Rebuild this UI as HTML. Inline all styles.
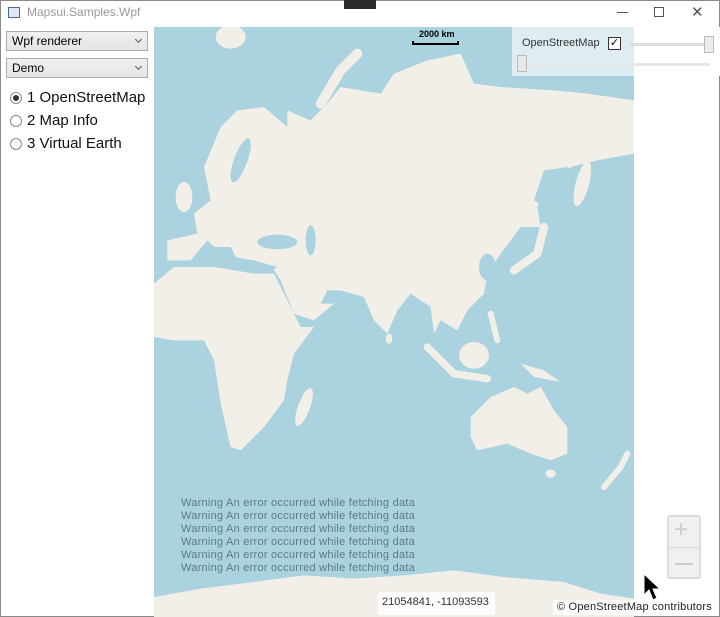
<!DOCTYPE html>
<html><head><style>
*{margin:0;padding:0;box-sizing:border-box}
body{width:720px;height:617px;background:#fff;position:relative;overflow:hidden;font-family:"Liberation Sans",sans-serif}
.win{position:absolute;left:0;top:0;width:720px;height:617px;border:1px solid #8a8a8a}
.t{position:absolute;white-space:nowrap}
.combo{position:absolute;left:6px;width:142px;height:20px;border:1px solid #acacac;background:linear-gradient(#f0f0f0,#e5e5e5);font-size:12px;padding:2px 5px;color:#000}
.combo:after{content:"";position:absolute;right:6px;top:5px;width:4px;height:4px;border-right:1px solid #555;border-bottom:1px solid #555;transform:rotate(45deg)}
.radio{position:absolute;left:10px;width:12px;height:12px;border:1px solid #888;border-radius:50%;background:#fff}
.rl{position:absolute;left:27px;font-size:15px;color:#111}
.warn{position:absolute;left:181px;font-size:11px;letter-spacing:0.25px;color:#5a7b87;line-height:13px}
</style></head><body>
<div class="win"></div>
<div class="t" style="left:8px;top:7px;width:12px;height:11px;border:1px solid #4a6a9a;background:#dfe8f3"></div>
<div class="t" style="left:27px;top:5px;font-size:12px;color:#999">Mapsui.Samples.Wpf</div>
<div class="t" style="left:344px;top:0;width:32px;height:9px;background:#2b2b2b"></div>
<div class="t" style="left:617px;top:12px;width:11px;height:1px;background:#555"></div>
<div class="t" style="left:654px;top:7px;width:10px;height:10px;border:1px solid #555"></div>
<div class="t" style="left:691px;top:3px;font-size:15px;color:#555">✕</div>

<div class="combo" style="top:31px">Wpf renderer</div>
<div class="combo" style="top:58px">Demo</div>
<div class="radio" style="top:92px"><div style="position:absolute;left:2px;top:2px;width:6px;height:6px;border-radius:50%;background:#333"></div></div>
<div class="rl" style="top:89px">1 OpenStreetMap</div>
<div class="radio" style="top:115px"></div>
<div class="rl" style="top:112px">2 Map Info</div>
<div class="radio" style="top:138px"></div>
<div class="rl" style="top:135px">3 Virtual Earth</div>

<svg style="position:absolute;left:154px;top:27px" width="480" height="590" viewBox="0 0 1440 1770">
<rect width="1440" height="1770" fill="#aad3df"/>
<g fill="#f2efe9">
<path d="M40,640 L130,620 L120,560 L170,520 L150,420 L200,300 L250,250 L330,240 L400,300 L400,250 L470,280 L520,230 L560,180 L620,190 L680,200 L720,140 L820,100 L920,80 L960,170 L1040,180 L1200,190 L1300,200 L1440,220 L1440,380 L1330,400 L1250,420 L1180,470 L1150,540 L1160,600 L1100,600 L1040,680 L1000,740 L990,800 L940,850 L910,910 L860,880 L840,920 L830,840 L770,800 L730,850 L700,920 L660,880 L630,810 L560,790 L520,790 L500,830 L540,830 L480,880 L420,860 L380,760 L360,730 L300,700 L250,700 L230,660 L180,660 L160,640 L110,700 L40,700 Z"/>
<path d="M0,770 L60,720 L180,720 L300,740 L360,740 L400,820 L440,900 L480,900 L420,980 L400,1060 L390,1120 L330,1200 L260,1270 L230,1260 L200,1130 L180,1000 L150,940 L60,940 L0,930 Z"/>
<ellipse cx="450" cy="1140" rx="18" ry="60" transform="rotate(20 450 1140)"/>
<path d="M950,1170 L1010,1110 L1080,1080 L1120,1100 L1160,1080 L1200,1150 L1240,1200 L1240,1280 L1190,1300 L1130,1280 L1060,1250 L970,1270 L950,1230 Z"/>
<ellipse cx="960" cy="985" rx="45" ry="40"/>
<path d="M1100,1010 L1170,1030 L1220,1065 L1140,1050 Z"/>
<ellipse cx="90" cy="510" rx="25" ry="45"/>
<ellipse cx="230" cy="30" rx="45" ry="35"/>
<ellipse cx="1190" cy="1340" rx="15" ry="12"/>
<ellipse cx="705" cy="935" rx="10" ry="15"/>
<ellipse cx="1285" cy="470" rx="20" ry="70" transform="rotate(15 1285 470)"/>
</g>
<g fill="none" stroke="#f2efe9" stroke-linecap="round">
<path d="M500,230 L560,130 L610,80" stroke-width="30"/>
<path d="M1080,730 L1150,680 L1170,600" stroke-width="25"/>
<path d="M820,960 L900,1040 L1000,1055" stroke-width="22"/>
<path d="M1010,860 L1030,940" stroke-width="18"/>
<path d="M1350,1380 L1400,1320 L1420,1280" stroke-width="18"/>
</g>
<g fill="#aad3df">
<ellipse cx="370" cy="645" rx="60" ry="22"/>
<ellipse cx="470" cy="640" rx="15" ry="45"/>
<path d="M130,670 L200,660 L260,720 L340,740 L370,720 L300,700 L240,690 L180,670 Z"/>
<ellipse cx="260" cy="400" rx="20" ry="70" transform="rotate(20 260 400)"/>
<path d="M1140,520 L1170,430 L1240,420 L1250,470 L1170,540 Z"/>
<ellipse cx="1000" cy="720" rx="25" ry="40"/>
</g>
<path d="M0,1710 L140,1685 L300,1665 L450,1645 L600,1655 L750,1645 L900,1630 L1050,1650 L1230,1665 L1340,1700 L1440,1715 L1440,1770 L0,1770 Z" fill="#f2efe9"/>
<rect x="1074" y="0" width="366" height="147" fill="#fff" opacity="0.6"/>
</svg>

<div class="t" style="left:419px;top:29px;font-size:9px;font-weight:bold">2000 km</div>
<div class="t" style="left:412px;top:41px;width:47px;height:4px;border:2px solid #000;border-top:none"></div>

<div class="t" style="left:634px;top:27px;width:86px;height:49px;background:#fff"></div>
<div class="t" style="left:522px;top:37px;font-size:11px;color:#333">OpenStreetMap</div>
<div class="t" style="left:608px;top:37px;width:13px;height:13px;border:1px solid #333;background:#fff;font-size:11px;line-height:11px;text-align:center">✓</div>
<div class="t" style="left:631px;top:43px;width:80px;height:3px;background:#e6e6e6;border:1px solid #d6d6d6"></div>
<div class="t" style="left:704px;top:36px;width:10px;height:17px;background:#ececec;border:1px solid #bbb"></div>
<div class="t" style="left:520px;top:63px;width:190px;height:3px;background:#e6e6e6"></div>
<div class="t" style="left:517px;top:55px;width:10px;height:17px;background:#e8e8e8;border:1px solid #bbb"></div>

<div class="warn" style="top:497px">Warning An error occurred while fetching data<br>Warning An error occurred while fetching data<br>Warning An error occurred while fetching data<br>Warning An error occurred while fetching data<br>Warning An error occurred while fetching data<br>Warning An error occurred while fetching data</div>

<div class="t" style="left:667px;top:515px;width:34px;height:64px;border:2px solid #dcdcdc;border-radius:3px;background:#f0f0f0"></div>
<div class="t" style="left:669px;top:547px;width:30px;height:1px;background:#d6d6d6"></div>
<div class="t" style="left:674px;top:516px;font-size:24px;color:#ccc">+</div>
<div class="t" style="left:675px;top:563px;width:18px;height:2px;background:#ccc"></div>

<div class="t" style="left:378px;top:592px;width:117px;height:23px;background:rgba(255,255,255,0.8)"></div>
<div class="t" style="left:382px;top:596px;font-size:11px;color:#333">21054841, -11093593</div>
<div class="t" style="left:553px;top:600px;width:166px;height:15px;background:rgba(255,255,255,0.85)"></div>
<div class="t" style="left:557px;top:601px;font-size:11px;letter-spacing:0.2px;color:#222">© OpenStreetMap contributors</div>

<svg style="position:absolute;left:643px;top:573px" width="20" height="30" viewBox="0 0 20 30"><path d="M1,1 L1,22 L6,17 L10,27 L14,25 L10,16 L17,16 Z" fill="#000" stroke="#fff" stroke-width="1"/></svg>
</body></html>
